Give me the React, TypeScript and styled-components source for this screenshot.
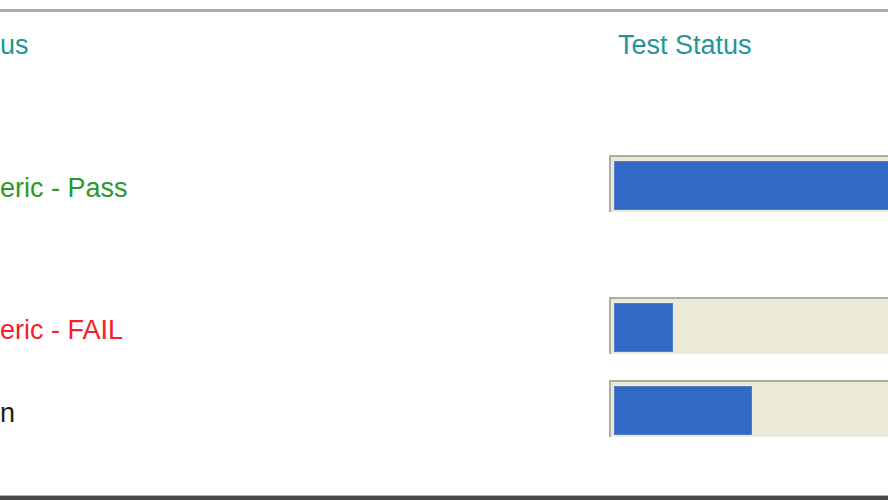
import styled, { createGlobalStyle } from 'styled-components';

const GlobalStyle = createGlobalStyle`
    html, body {
        margin: 0;
        padding: 0;
        background: #ffffff;
        overflow: hidden;
    }
`;

type Status = 'pass' | 'fail' | 'plain';

const rows: { label: string; status: Status; fill: number }[] = [
    { label: 'eric - Pass', status: 'pass', fill: 300 },
    { label: 'eric - FAIL', status: 'fail', fill: 59 },
    { label: 'n', status: 'plain', fill: 138 },
];

const App = () => (
    <>
        <GlobalStyle />
        <Page>
            <Frame>
                <Row h={66}>
                    <Heading>us</Heading>
                    <Heading>Test Status</Heading>
                </Row>
                <Row h={72} />
                <Row h={67}>
                    <Label status={rows[0].status}>{rows[0].label}</Label>
                    <Track>
                        <Fill style={{ width: rows[0].fill }} />
                    </Track>
                </Row>
                <Row h={75} />
                <Row h={67}>
                    <Label status={rows[1].status}>{rows[1].label}</Label>
                    <Track>
                        <Fill style={{ width: rows[1].fill }} />
                    </Track>
                </Row>
                <Row h={16} />
                <Row h={67}>
                    <Label status={rows[2].status}>{rows[2].label}</Label>
                    <Track>
                        <Fill style={{ width: rows[2].fill }} />
                    </Track>
                </Row>
            </Frame>
        </Page>
    </>
);

const Page = styled.div`
    height: 500px;
    padding-top: 9px;
    box-sizing: border-box;
    display: flex;
    flex-direction: column;
`;

const Frame = styled.div`
    flex: 1;
    border-top: 3px solid #ababab;
    border-bottom: 4px solid #4a4a4a;
    box-shadow: inset 0 -1px 0 #b0b0b0;
    display: flex;
    flex-direction: column;
    font-family: "Liberation Sans", Arial, sans-serif;
    font-size: 27px;
    line-height: 27px;
`;

const Row = styled.div<{ h: number }>`
    height: ${(p) => p.h}px;
    flex-shrink: 0;
    display: grid;
    grid-template-columns: 609px 1fr;
    align-items: center;
`;

const Heading = styled.div`
    color: #23959b;
    padding-left: 0;

    &:last-child {
        padding-left: 9px;
    }
`;

const statusColor: Record<Status, string> = {
    pass: '#2a982a',
    fail: '#f5202c',
    plain: '#1c1c1c',
};

const Label = styled.div<{ status: Status }>`
    color: ${(p) => statusColor[p.status]};
    margin-top: 10px;
    white-space: nowrap;
`;

const Track = styled.div`
    height: 57px;
    box-sizing: border-box;
    background: #ece9d8;
    border-top: 2px solid #b0aca0;
    border-left: 2px solid #b0aca0;
    padding: 4px 0 2px 3px;
    display: flex;
`;

const Fill = styled.div`
    height: 100%;
    background: #3169c4;
    box-shadow: inset 0 0 0 1px #4a7fce;
`;

export default App;
